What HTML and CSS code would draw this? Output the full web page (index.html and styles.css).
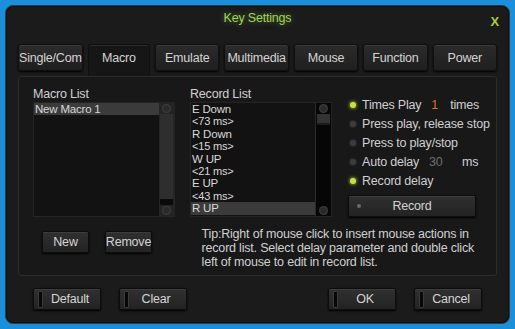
FILE: index.html
```html
<!DOCTYPE html>
<html lang="en">
<head>
  <meta charset="UTF-8">
  <title>Key Settings</title>
  <link rel="stylesheet" href="styles.css">
</head>
<body>
  <div class="window">
    <div class="titlebar">
      <span class="title">Key Settings</span>
      <span class="close">X</span>
    </div>

    <div class="tabs">
      <div class="tab">Single/Com</div>
      <div class="tab active">Macro</div>
      <div class="tab">Emulate</div>
      <div class="tab">Multimedia</div>
      <div class="tab">Mouse</div>
      <div class="tab">Function</div>
      <div class="tab">Power</div>
    </div>

    <div class="panel">
      <div class="top-row">
        <div class="col">
          <div class="label">Macro List</div>
          <div class="listbox">
            <div class="items">
              <div class="item selected">New Macro 1</div>
            </div>
            <div class="scroll gray">
              <span class="arrow"></span>
              <span class="thumb long"></span>
              <span class="arrow"></span>
            </div>
          </div>
        </div>

        <div class="col">
          <div class="label">Record List</div>
          <div class="listbox">
            <div class="items" id="records"></div>
            <div class="scroll black">
              <span class="arrow"></span>
              <span class="thumb short"></span>
              <span class="track"></span>
              <span class="arrow"></span>
            </div>
          </div>
        </div>

        <div class="options">
          <div class="opt"><span class="dot on"></span>Times Play <span class="val orange">1</span><span class="unit">times</span></div>
          <div class="opt"><span class="dot"></span>Press play, release stop</div>
          <div class="opt"><span class="dot"></span>Press to play/stop</div>
          <div class="opt"><span class="dot"></span>Auto delay <span class="val grey">30</span><span class="unit">ms</span></div>
          <div class="opt"><span class="dot on"></span>Record delay</div>
          <div class="btn record"><span class="led"></span>Record</div>
        </div>
      </div>

      <div class="bottom-row">
        <div class="list-buttons">
          <div class="btn small">New</div>
          <div class="btn small">Remove</div>
        </div>
        <p class="tip">Tip:Right of mouse click to insert mouse actions in record list. Select delay parameter and double click left of mouse to edit in record list.</p>
      </div>
    </div>

    <div class="footer">
      <div class="group">
        <div class="btn wide"><span class="slot"></span>Default</div>
        <div class="btn wide"><span class="slot"></span>Clear</div>
      </div>
      <div class="group">
        <div class="btn wide"><span class="slot"></span>OK</div>
        <div class="btn wide"><span class="slot"></span>Cancel</div>
      </div>
    </div>
  </div>

  <script>
    const records = ["E Down", "<73 ms>", "R Down", "<15 ms>", "W UP", "<21 ms>", "E UP", "<43 ms>", "R UP"];
    const box = document.getElementById("records");

    records.forEach((text, i) => {
      const row = document.createElement("div");
      row.className = "item";
      if (text.startsWith("<")) row.classList.add("delay");
      if (i === records.length - 1) row.classList.add("selected");
      row.textContent = text;
      box.appendChild(row);
    });
  </script>
</body>
</html>
```

FILE: styles.css
```css
body {
  margin: 0;
  padding: 5px;
  background-color: #1a8fdc;
  font-family: 'Liberation Sans', Arial, sans-serif;
  font-size: 12px;
  letter-spacing: -0.2px;
  color: #d2d2d2;
}

.window {
  width: 503px;
  height: 317px;
  background-color: #1b1b1c;
  border: 1px solid #2f3a44;
  border-radius: 8px;
  box-shadow: inset 0 0 0 1px #101010;
  display: flex;
  flex-direction: column;
}

.titlebar {
  height: 38px;
  position: relative;
  display: flex;
  justify-content: center;
  align-items: flex-start;
}

.title {
  margin-top: 5px;
  font-size: 12.5px;
  color: #9fd35a;
  text-shadow: 0 0 6px rgba(140, 200, 60, 0.55);
}

.close {
  position: absolute;
  right: 10px;
  top: 8px;
  font-size: 13px;
  font-weight: bold;
  color: #a8cc3c;
}

.tabs {
  display: flex;
  gap: 5px;
  padding: 0 12px;
  height: 32px;
}

.tab {
  width: 63px;
  height: 25px;
  display: flex;
  align-items: center;
  justify-content: center;
  font-size: 12.5px;
  color: #d4d4d4;
  background: linear-gradient(#2b2b2c, #1f1f20);
  border: 1px solid #101010;
  border-radius: 3px;
  box-shadow: inset 0 1px 0 #3a3a3a, 0 1px 2px #000;
  white-space: nowrap;
}

.tab.active {
  height: 32px;
  align-items: flex-start;
  padding-top: 6px;
  box-sizing: border-box;
  background: #161617;
  border-bottom: none;
  border-radius: 3px 3px 0 0;
  box-shadow: inset 0 1px 0 #2a2a2a;
}

.panel {
  margin: 0 12px;
  height: 200px;
  box-sizing: border-box;
  border: 1px solid #2c2c2d;
  border-radius: 3px;
  background-color: #181819;
  padding: 9px 14px 0;
}

.top-row {
  display: flex;
  gap: 15px;
}

.col {
  width: 142px;
}

.label {
  height: 16px;
  line-height: 16px;
  font-size: 12.5px;
}

.listbox {
  display: flex;
  height: 113px;
  background-color: #121213;
  border: 1px solid #242425;
}

.items {
  flex: 1;
}

.item {
  height: 12.4px;
  line-height: 12px;
  padding-left: 1px;
  font-size: 11.5px;
  color: #d8d8d8;
}

.item.delay {
  font-size: 11px;
}

.item.selected {
  background-color: #3b3b3c;
}

.scroll {
  width: 15px;
  display: flex;
  flex-direction: column;
  align-items: center;
}

.scroll.gray {
  background-color: #242425;
}

.scroll.black {
  background-color: #060606;
  border-left: 1px solid #2a2a2a;
}

.arrow {
  width: 9px;
  height: 9px;
  margin: 1px 0;
  border-radius: 50%;
  background: radial-gradient(#2a2a2a 40%, #3e3e3e 70%);
}

.thumb {
  width: 13px;
  background-color: #2e2e2f;
}

.thumb.long {
  flex: 1;
  border-bottom: 6px solid #0a0a0a;
}

.thumb.short {
  height: 9px;
  background-color: #333334;
  border-bottom: 2px solid #1c1c1c;
}

.track {
  flex: 1;
}

.options {
  width: 132px;
  margin-top: 10px;
}

.opt {
  height: 18.8px;
  display: flex;
  align-items: center;
  font-size: 12.5px;
  color: #d0d0d0;
  white-space: nowrap;
}

.dot {
  flex-shrink: 0;
  width: 6px;
  height: 6px;
  margin: 0 6px 0 3px;
  border-radius: 50%;
  background-color: #3c3c3c;
  box-shadow: 0 0 0 1px #262626;
}

.dot.on {
  background-color: #c6e04a;
  box-shadow: 0 0 3px 1px #6d8a1c;
}

.val {
  margin-left: 10px;
  width: 33px;
}

.orange {
  color: #d2742c;
}

.grey {
  color: #6e6e6e;
}

.unit {
  color: #d0d0d0;
}

.btn {
  display: flex;
  align-items: center;
  justify-content: center;
  box-sizing: border-box;
  height: 22px;
  color: #d4d4d4;
  background: linear-gradient(#303031, #232324);
  border: 1px solid #0d0d0d;
  border-radius: 2px;
  box-shadow: inset 0 1px 0 #3d3d3d, 0 1px 2px #000;
  position: relative;
}

.btn.record {
  width: 128px;
  margin-top: 5px;
  margin-left: 1px;
  font-size: 12.5px;
}

.led {
  position: absolute;
  left: 8px;
  top: 8px;
  width: 4px;
  height: 4px;
  border-radius: 50%;
  background-color: #6a6a6a;
}

.bottom-row {
  display: flex;
  margin-top: 13px;
}

.list-buttons {
  width: 157px;
  display: flex;
  gap: 16px;
  padding-left: 9px;
  padding-top: 1px;
  box-sizing: border-box;
}

.btn.small {
  width: 47px;
  font-size: 12.5px;
}

.tip {
  margin: -3px 0 0 14px;
  width: 285px;
  font-size: 12.5px;
  line-height: 14px;
  color: #d0d0d0;
}

.footer {
  display: flex;
  justify-content: space-between;
  padding: 12px 27px 0;
}

.group {
  display: flex;
  gap: 18px;
}

.btn.wide {
  width: 68px;
  font-size: 12.5px;
  padding-left: 6px;
}

.slot {
  position: absolute;
  left: 4px;
  top: 2px;
  width: 3px;
  height: 15px;
  background-color: #070707;
  border: 1px solid #3a3a3a;
  border-radius: 1px;
}
```
